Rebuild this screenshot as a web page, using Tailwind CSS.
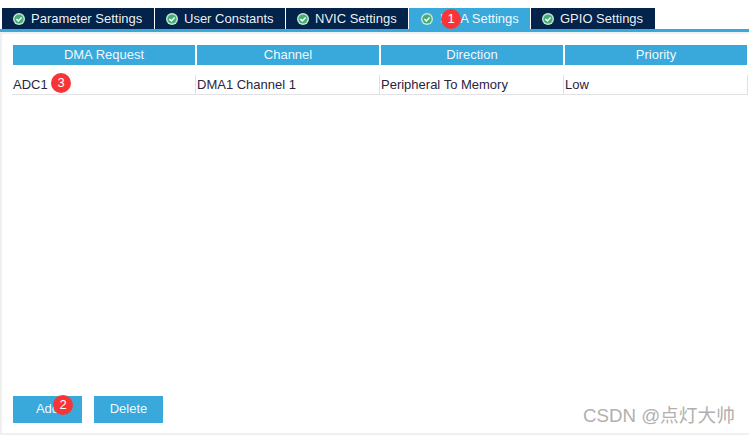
<!DOCTYPE html>
<html lang="en">
<head>
    <meta charset="UTF-8">
    <title>DMA Settings</title>
    <script src="https://cdn.jsdelivr.net/npm/@tailwindcss/browser@4"></script>
</head>
<body class="bg-white">
    <div class="relative w-[749px] h-[435px] overflow-hidden bg-white font-['Liberation_Sans',sans-serif] text-[13px]">
        <!-- tabs -->
        <div class="flex gap-px h-[32px] pt-[8px] pl-[2px] border-b-[3px] border-[#39a9dc]">
            <div class="w-[152px] flex items-center pl-[11px] gap-[6px] bg-[#03234b] text-white/95">
                <svg class="w-[12px] h-[12px]" viewBox="0 0 12 12"><circle cx="6" cy="6" r="6" fill="#c4ebd5"/><circle cx="6" cy="6" r="4.6" fill="#45ad78"/><path d="M3.4 6l1.9 1.9 3.3-3.4" fill="none" stroke="#fff" stroke-width="1.5"/></svg>
                <span>Parameter Settings</span>
            </div>
            <div class="w-[130px] flex items-center pl-[11px] gap-[6px] bg-[#03234b] text-white/95">
                <svg class="w-[12px] h-[12px]" viewBox="0 0 12 12"><circle cx="6" cy="6" r="6" fill="#c4ebd5"/><circle cx="6" cy="6" r="4.6" fill="#45ad78"/><path d="M3.4 6l1.9 1.9 3.3-3.4" fill="none" stroke="#fff" stroke-width="1.5"/></svg>
                <span>User Constants</span>
            </div>
            <div class="w-[122px] flex items-center pl-[11px] gap-[6px] bg-[#03234b] text-white/95">
                <svg class="w-[12px] h-[12px]" viewBox="0 0 12 12"><circle cx="6" cy="6" r="6" fill="#c4ebd5"/><circle cx="6" cy="6" r="4.6" fill="#45ad78"/><path d="M3.4 6l1.9 1.9 3.3-3.4" fill="none" stroke="#fff" stroke-width="1.5"/></svg>
                <span>NVIC Settings</span>
            </div>
            <div class="w-[121px] flex items-center pl-[12px] gap-[7px] bg-[#39a9dc] text-white/95">
                <svg class="w-[12px] h-[12px]" viewBox="0 0 12 12"><circle cx="6" cy="6" r="6" fill="#c4ebd5"/><circle cx="6" cy="6" r="4.6" fill="#45ad78"/><path d="M3.4 6l1.9 1.9 3.3-3.4" fill="none" stroke="#fff" stroke-width="1.5"/></svg>
                <span>DMA Settings</span>
            </div>
            <div class="w-[124px] flex items-center pl-[11px] gap-[6px] bg-[#03234b] text-white/95">
                <svg class="w-[12px] h-[12px]" viewBox="0 0 12 12"><circle cx="6" cy="6" r="6" fill="#c4ebd5"/><circle cx="6" cy="6" r="4.6" fill="#45ad78"/><path d="M3.4 6l1.9 1.9 3.3-3.4" fill="none" stroke="#fff" stroke-width="1.5"/></svg>
                <span>GPIO Settings</span>
            </div>
        </div>

        <!-- panel -->
        <div class="flex flex-col h-[403px] border-l-2 border-b-2 border-t-2 border-[#f0f0f0] pl-[11px] pt-[11px] pb-[10px]">
            <div class="grid grid-cols-[182px_182px_182px_182px] gap-[2px] h-[20px] text-white/95 text-center leading-[20px]">
                <div class="bg-[#39a9dc]">DMA Request</div>
                <div class="bg-[#39a9dc]">Channel</div>
                <div class="bg-[#39a9dc]">Direction</div>
                <div class="bg-[#39a9dc]">Priority</div>
            </div>
            <div class="grid grid-cols-[183px_184px_184px_185px] w-[736px] -ml-px h-[20px] mt-[10px] border-b border-[#e2e2e4] text-[#2b2440] leading-[20px]">
                <div class="pl-px">ADC1</div>
                <div class="border-l border-[#e2e2e4] pl-px">DMA1 Channel 1</div>
                <div class="border-l border-[#e2e2e4] pl-px">Peripheral To Memory</div>
                <div class="border-l border-r border-[#e2e2e4] pl-px">Low</div>
            </div>
            <div class="flex gap-[12px] mt-auto text-white/95">
                <button class="w-[69px] h-[27px] pb-px bg-[#39a9dc]">Add</button>
                <button class="w-[69px] h-[27px] pb-px bg-[#39a9dc]">Delete</button>
            </div>
        </div>

        <!-- annotation badges -->
        <div class="absolute left-[441px] top-[9px] w-[20px] h-[20px] rounded-full bg-[#f83437] text-white text-center leading-[20px]">1</div>
        <div class="absolute left-[53px] top-[395px] w-[20px] h-[20px] rounded-full bg-[#f83437] text-white text-center leading-[20px]">2</div>
        <div class="absolute left-[51px] top-[73px] w-[20px] h-[20px] rounded-full bg-[#f83437] text-white text-center leading-[20px]">3</div>

        <!-- watermark -->
        <div class="absolute left-[583px] top-[405px] text-[18.7px] leading-[22px] text-[#b0b0b0] font-['Liberation_Sans','Noto_Sans_CJK_SC',sans-serif]">CSDN @点灯大帅</div>
    </div>
</body>
</html>
